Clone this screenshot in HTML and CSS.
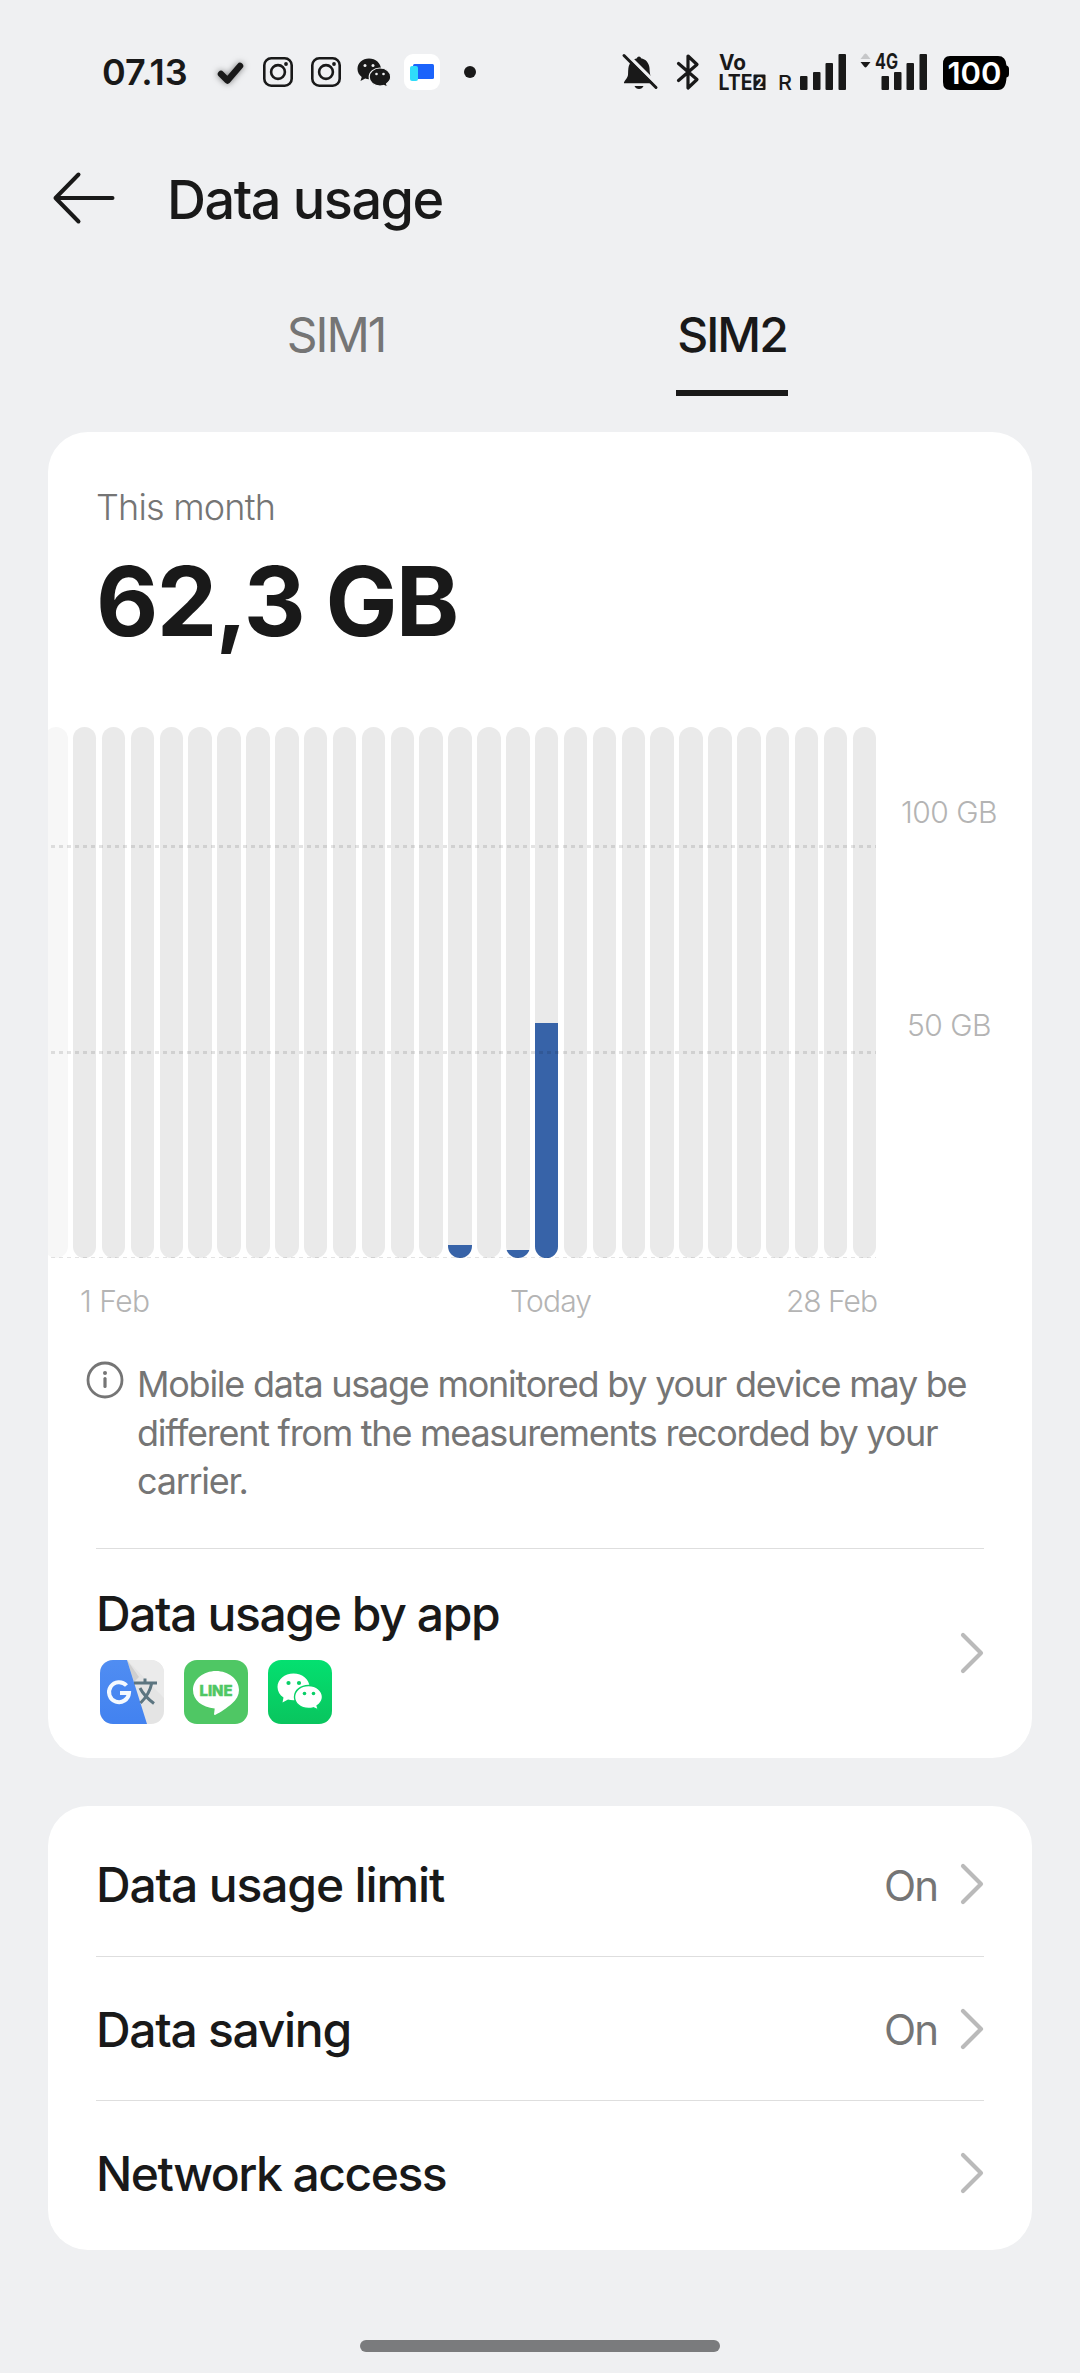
FILE: index.html
```html
<!DOCTYPE html>
<html lang="en">
<head>
    <meta charset="UTF-8">
    <meta name="viewport" content="width=device-width, initial-scale=1.0">
    <title>Data usage</title>
    <link rel="stylesheet" href="styles.css">
</head>
<body>

<div class="status-bar">
    <span class="time">07.13</span>
    <div class="notifications">
        <svg class="check" width="36" height="36" viewBox="0 0 36 36"><path d="M9 20l6.500 6.500L28 12" fill="none" stroke="#191919" stroke-width="6.500" stroke-linecap="round" stroke-linejoin="round"/></svg>
        <svg width="30" height="30" viewBox="0 0 30 30" fill="none" stroke="#191919" stroke-width="2.600"><rect x="1.300" y="1.300" width="27.400" height="27.400" rx="7"/><circle cx="15" cy="15" r="6.900"/><circle cx="23" cy="7" r="1.900" fill="#191919" stroke="none"/></svg>
        <svg width="30" height="30" viewBox="0 0 30 30" fill="none" stroke="#191919" stroke-width="2.600"><rect x="1.300" y="1.300" width="27.400" height="27.400" rx="7"/><circle cx="15" cy="15" r="6.900"/><circle cx="23" cy="7" r="1.900" fill="#191919" stroke="none"/></svg>
        <svg class="wechat" width="34" height="29" viewBox="0 0 34 29">
            <path d="M12 0.500C5.500 0.500 0.500 5 0.500 11c0 3.300 1.600 6 4.200 8L3.500 23l4.700-2.400c1.200.4 2.400.6 3.800.6 6.500 0 12-4.400 12-10.200S18.500.5 12 .5z" fill="#191919"/>
            <path d="M23 10c-6 0-10.800 4-10.800 9S17 28 23 28c1.300 0 2.500-.2 3.600-.5l3.900 1.500-.9-3.300c2.400-1.600 4.100-4 4.100-6.700 0-5-4.700-9-10.700-9z" fill="#191919" stroke="#eff0f2" stroke-width="1.200"/>
            <g fill="#eff0f2"><circle cx="8" cy="7.500" r="1.500"/><circle cx="16" cy="7.500" r="1.500"/><circle cx="19.500" cy="16" r="1.300"/><circle cx="26.500" cy="16" r="1.300"/></g>
        </svg>
        <svg width="36" height="36" viewBox="0 0 36 36"><rect width="36" height="36" rx="9" fill="#fff"/><rect x="9" y="10" width="21" height="15" rx="1.500" fill="#1b63fb"/><rect x="6" y="12" width="8" height="15" rx="2" fill="#2fdcfa"/></svg>
        <span class="more-dot"></span>
    </div>
    <div class="system-icons">
        <svg width="410" height="50" viewBox="0 -4 410 50">
            <!-- muted bell -->
            <path d="M18 4.500c1 0 1.800.7 2 1.800 4.800.9 8 4.600 8.500 9.700.3 5 .4 8.200 3.500 12.500v2.800H3c-.5-2 3.500-4.500 4-8.300.2-2.500 0-6 .8-9C9 10 12 7.300 16 6.300c.2-1.100 1-1.800 2-1.800z" fill="#191919"/>
            <path d="M13.500 34h9c-.8 2-2.400 3-4.500 3s-3.700-1-4.500-3z" fill="#191919"/>
            <path d="M5.500 2l33 33" stroke="#eff0f2" stroke-width="3.500"/>
            <path d="M3 3.500l32 32" stroke="#191919" stroke-width="3" stroke-linecap="round"/>
            <!-- bluetooth -->
            <path d="M57.500 11.500l18.500 16-9 8.500V4l9 8.500-18.500 16" fill="none" stroke="#191919" stroke-width="3.200" stroke-linejoin="round" stroke-linecap="round"/>
            <g fill="#191919" font-weight="700">
                <text x="98" y="17.500" font-size="21" textLength="27" lengthAdjust="spacingAndGlyphs">Vo</text>
                <text x="97.500" y="38" font-size="21" textLength="34" lengthAdjust="spacingAndGlyphs">LTE</text>
            </g>
            <rect x="132.500" y="22.500" width="12" height="15.500" rx="1" fill="#191919"/>
            <text x="134.500" y="35.500" font-size="14" font-weight="700" fill="#eff0f2" textLength="8" lengthAdjust="spacingAndGlyphs">2</text>
            <text x="157" y="38" font-size="20.500" font-weight="500" fill="#191919" textLength="14" lengthAdjust="spacingAndGlyphs">R</text>
            <g fill="#191919">
                <rect x="179" y="24" width="7.500" height="14" rx="1"/><rect x="192" y="20" width="7.500" height="18" rx="1"/><rect x="204.500" y="11" width="7.500" height="27" rx="1"/><rect x="217.500" y="2" width="7.500" height="36" rx="1"/>
                <rect x="260.500" y="24" width="7.500" height="14" rx="1"/><rect x="273" y="20" width="7.500" height="18" rx="1"/><rect x="285.500" y="11" width="7.500" height="27" rx="1"/><rect x="298.500" y="2" width="7.500" height="36" rx="1"/>
                <path d="M239.500 10h10l-3.800 4.800q-1.200 1.400-2.400 0z"/>
            </g>
            <path d="M239.500 7h10l-3.800-4.800q-1.200-1.400-2.400 0z" fill="#c6c7c9"/>
            <text x="254" y="16.500" font-size="21" font-weight="700" fill="#191919" stroke="#eff0f2" stroke-width="2.500" paint-order="stroke" textLength="23" lengthAdjust="spacingAndGlyphs">4G</text>
            <!-- battery -->
            <path d="M329 4h48q8 0 8.500 9.500q2.500.5 2.500 3.500v5q0 3-2.500 3.500Q385 38 377 38h-48q-7 0-7-8V12q0-8 7-8z" fill="#000"/>
            <text x="326.500" y="32" font-size="30" font-weight="600" fill="#fff" textLength="54" lengthAdjust="spacingAndGlyphs">100</text>
        </svg>
    </div>
</div>

<header class="header">
    <svg class="back" width="64" height="54" viewBox="0 0 64 54"><path d="M61.500 27H4.500M27.500 3.500L4.500 27 27.500 50.500" fill="none" stroke="#191919" stroke-width="4" stroke-linecap="round" stroke-linejoin="round"/></svg>
    <h1>Data usage</h1>
</header>

<nav class="tabs">
    <a class="tab"><span>SIM1</span></a>
    <a class="tab active"><span>SIM2</span></a>
</nav>

<section class="card usage-card">
    <div class="summary">
        <p class="period">This month</p>
        <p class="total">62,3 GB</p>
    </div>

    <div class="chart">
        <div class="plot">
            <div class="bars" id="bars"></div>
            <div class="grid-line line-100"></div>
            <div class="grid-line line-50"></div>
            <div class="grid-line line-0"></div>
        </div>
        <div class="y-axis">
            <span class="y-100">100 GB</span>
            <span class="y-50">50 GB</span>
        </div>
    </div>
    <div class="x-axis">
        <span class="x-first">1 Feb</span>
        <span class="x-today">Today</span>
        <span class="x-last">28 Feb</span>
    </div>

    <div class="note">
        <svg width="38" height="38" viewBox="0 0 38 38"><circle cx="19" cy="19" r="17" fill="none" stroke="#757575" stroke-width="2.800"/><path d="M19 17.500v8" stroke="#757575" stroke-width="3.200" stroke-linecap="round"/><circle cx="19" cy="12" r="2" fill="#757575"/></svg>
        <p>Mobile data usage monitored by your device may be<br>different from the measurements recorded by your<br>carrier.</p>
    </div>

    <div class="by-app">
        <div>
            <h2 class="by-app-title">Data usage by app</h2>
            <div class="apps">
                <!-- Translate -->
                <svg width="64" height="64" viewBox="0 0 64 64">
                    <defs>
                        <linearGradient id="blue" x2="0" y2="1"><stop stop-color="#508df2"/><stop offset="1" stop-color="#4282f0"/></linearGradient>
                        <clipPath id="round"><rect width="64" height="64" rx="13"/></clipPath>
                    </defs>
                    <g clip-path="url(#round)">
                        <rect width="64" height="64" fill="#e4e4e4"/>
                        <path d="M27 0h37v38z" fill="#ebebeb"/>
                        <path d="M27 0l12 17-5 5z" fill="#cfcfcf"/>
                        <path d="M0 0h27l20 64H0z" fill="url(#blue)"/>
                        <path d="M26.500 25.500A10 10 0 1 0 29 33h-9" fill="none" stroke="#f4f9ff" stroke-width="4"/>
                        <path d="M34 23h23M45 18.500V23M51.500 24c-1.500 8-6 14-11 19M40 28c3 6 8 11 14 15.500" fill="none" stroke="#5c7580" stroke-width="3"/>
                    </g>
                </svg>
                <!-- LINE -->
                <svg width="64" height="64" viewBox="0 0 64 64">
                    <rect width="64" height="64" rx="13" fill="#4fc764"/>
                    <path d="M32 11c12.500 0 23 8.300 23 19 0 5-2.500 9.500-7 13.500-5 4.500-12 9-16.500 11.300-1.500.7-1.600-.5-1.300-2l.5-4.300C18 47.500 9 40 9 30c0-10.700 10.500-19 23-19z" fill="#fff"/>
                    <text x="15.500" y="35.500" font-size="15" font-weight="800" fill="#4fc764" stroke="#4fc764" stroke-width=".5" textLength="33" lengthAdjust="spacingAndGlyphs">LINE</text>
                </svg>
                <!-- WeChat -->
                <svg width="64" height="64" viewBox="0 0 64 64">
                    <defs><linearGradient id="green" x2="0" y2="1"><stop stop-color="#04e070"/><stop offset="1" stop-color="#09c55e"/></linearGradient></defs>
                    <rect width="64" height="64" rx="13" fill="url(#green)"/>
                    <path d="M25.500 13.500C16.500 13.500 9.500 19.500 9.500 27c0 4.200 2.300 8 6 10.500l-1 5 5.500-3c1.700.5 3.600.8 5.500.8 9 0 16-6 16-13.300s-7-13.500-16-13.500z" fill="#fff"/>
                    <path d="M40.500 25.500c-8 0-14 5.200-14 11.500s6 11.500 14 11.500c1.700 0 3.300-.2 4.800-.7l5 2-1.200-4c3.300-2.200 5.400-5.300 5.400-8.800 0-6.300-6-11.500-14-11.500z" fill="#fff" stroke="#08d267" stroke-width="1.400"/>
                    <g fill="#08cf66"><circle cx="20.500" cy="23" r="2.100"/><circle cx="31" cy="23" r="2.100"/><circle cx="36.500" cy="33.500" r="1.800"/><circle cx="45.500" cy="33.500" r="1.800"/></g>
                </svg>
            </div>
        </div>
        <svg class="chevron" width="26" height="44" viewBox="0 0 26 44"><path d="M5 4l18 18L5 40"/></svg>
    </div>
</section>

<section class="card settings-card">
    <div class="row">
        <span class="row-title limit">Data usage limit</span>
        <span class="row-value">On</span>
        <svg class="chevron" width="26" height="44" viewBox="0 0 26 44"><path d="M5 4l18 18L5 40"/></svg>
    </div>
    <div class="row">
        <span class="row-title saving">Data saving</span>
        <span class="row-value">On</span>
        <svg class="chevron" width="26" height="44" viewBox="0 0 26 44"><path d="M5 4l18 18L5 40"/></svg>
    </div>
    <div class="row">
        <span class="row-title access">Network access</span>
        <svg class="chevron" width="26" height="44" viewBox="0 0 26 44"><path d="M5 4l18 18L5 40"/></svg>
    </div>
</section>

<div class="home-indicator"></div>

<script>
    // Height in px of the used part of each day, index 0 is the last day of January
    var usage = { 14: 13, 16: 8, 17: 235 };
    var bars = document.getElementById('bars');

    for (var day = 0; day <= 28; day++) {
        var bar = document.createElement('div');
        bar.className = day === 0 ? 'bar previous' : 'bar';
        if (usage[day]) {
            var fill = document.createElement('div');
            fill.className = 'fill';
            fill.style.height = usage[day] + 'px';
            bar.appendChild(fill);
        }
        bars.appendChild(bar);
    }
</script>

</body>
</html>
```

FILE: styles.css
```css
body {
    margin: 0;
    width: 1080px;
    height: 2373px;
    overflow: hidden;
    background-color: #eff0f2;
    color: #191919;
    font-family: Inter, Roboto, "Liberation Sans", sans-serif;
}

h1, h2, p {
    margin: 0;
    font-weight: 500;
}

svg {
    display: block;
    flex-shrink: 0;
}

/* Status bar */
.status-bar {
    display: flex;
    align-items: center;
    height: 144px;
    padding-left: 102px;
    box-sizing: border-box;
}

.time {
    width: 110px;
    font-size: 36px;
    font-weight: 600;
    white-space: nowrap;
}

.notifications {
    display: flex;
    align-items: center;
    width: 409px;
}

.notifications svg {
    margin-right: 18px;
}

.notifications .check {
    margin-right: 15px;
    filter: drop-shadow(0 0 3px rgba(0, 0, 0, 0.5));
}

.notifications .wechat {
    margin: 0 13px 0 -2px;
}

.more-dot {
    width: 12px;
    height: 12px;
    margin-left: 6px;
    border-radius: 50%;
    background-color: #191919;
}

.system-icons {
    padding-top: 2px;
}

/* Header */
.header {
    display: flex;
    align-items: center;
    height: 108px;
    padding-left: 51px;
}

.header h1 {
    margin-left: 52px;
    padding-top: 3px;
    font-size: 54px;
    line-height: 66px;
    letter-spacing: -1.5px;
    white-space: nowrap;
}

/* Tabs */
.tabs {
    display: flex;
    height: 144px;
    padding: 0 150px 0 138px;
}

.tab {
    flex: 1;
    display: flex;
    justify-content: center;
    font-size: 48px;
    font-weight: 400;
    letter-spacing: -2px;
    color: #757575;
}

.tab span {
    height: 144px;
    padding: 54px 1px 0;
    box-sizing: border-box;
    line-height: 58px;
}

.tab.active span {
    color: #191919;
    font-weight: 500;
    border-bottom: 6px solid #191919;
}

/* Cards */
.card {
    margin: 0 48px;
    border-radius: 40px;
    background-color: #fff;
    overflow: hidden;
}

.usage-card {
    height: 1326px;
    margin-top: 36px;
}

.summary {
    height: 295px;
    padding: 53px 48px 0;
    box-sizing: border-box;
}

.period {
    font-size: 36px;
    line-height: 44px;
    font-weight: 300;
    letter-spacing: -0.8px;
    color: #757575;
}

.total {
    margin-top: 20px;
    font-size: 96px;
    line-height: 104px;
    font-weight: 700;
    letter-spacing: -1.6px;
}

/* Chart */
.chart {
    display: flex;
    height: 531px;
}

.plot {
    position: relative;
    width: 828px;
    overflow: hidden;
}

.bars {
    display: grid;
    grid-template-columns: repeat(29, 1fr);
    gap: 5.4px;
    height: 531px;
    margin-left: -3.9px;
}

.bar {
    display: flex;
    align-items: flex-end;
    border-radius: 12px;
    background-color: #eaeaea;
    overflow: hidden;
}

.bar.previous {
    background-color: #f7f7f7;
}

.fill {
    width: 100%;
    background-color: #3763a8;
}

/* Dashed lines drawn over the bars */
.grid-line {
    position: absolute;
    left: 0;
    right: 0;
    height: 3px;
    background: repeating-linear-gradient(90deg, transparent 0 3px, rgba(0, 0, 0, 0.11) 3px 7px, transparent 7px 8px);
}

.line-100 {
    top: 118px;
}

.line-50 {
    top: 324px;
}

.line-0 {
    bottom: 0;
    height: 1.5px;
}

.y-axis {
    display: flex;
    flex-direction: column;
    align-items: center;
    width: 146px;
}

.y-axis span,
.x-axis span {
    font-size: 30px;
    line-height: 36px;
    font-weight: 300;
    letter-spacing: -0.5px;
    color: #b4b4b4;
    white-space: nowrap;
}

.y-100 {
    margin-top: 67px;
}

.y-50 {
    margin-top: 177px;
}

.x-axis {
    display: flex;
    height: 72px;
    margin-top: 25px;
}

.x-first {
    width: 430px;
    margin-left: 32px;
}

.x-axis .x-today {
    flex: 1;
    letter-spacing: -0.8px;
}

.x-axis .x-last {
    margin-right: 155px;
    letter-spacing: -1px;
}

/* Note */
.note {
    display: flex;
    height: 193px;
    padding: 6px 0 0 38px;
    box-sizing: border-box;
}

.note p {
    margin: -1px 0 0 13px;
    font-size: 36px;
    line-height: 48.5px;
    font-weight: 400;
    letter-spacing: -1.25px;
    color: #757575;
    white-space: nowrap;
}

/* Data usage by app */
.by-app {
    display: flex;
    justify-content: space-between;
    margin: 0 48px;
    border-top: 1px solid #dedede;
}

.by-app-title {
    margin-top: 36px;
    font-size: 48px;
    line-height: 58px;
    letter-spacing: -1.4px;
    white-space: nowrap;
}

.apps {
    display: flex;
    gap: 20px;
    padding: 17px 0 0 4px;
}

.by-app .chevron {
    margin-top: 82px;
}

.chevron path {
    fill: none;
    stroke: #bababa;
    stroke-width: 4.2;
    stroke-linecap: round;
    stroke-linejoin: round;
}

/* Settings */
.settings-card {
    height: 444px;
    margin-top: 48px;
    padding: 6px 48px;
    box-sizing: border-box;
}

.row {
    display: flex;
    align-items: center;
    height: 144px;
}

.row + .row {
    height: 143px;
    border-top: 1px solid #dedede;
}

.row-title {
    flex: 1;
    padding-top: 2px;
    font-size: 48px;
    line-height: 58px;
    font-weight: 500;
}

.limit {
    letter-spacing: -1.15px;
}

.saving {
    letter-spacing: -1.3px;
}

.access {
    letter-spacing: -1.5px;
}

.row-value {
    margin-right: 21px;
    padding-top: 2px;
    font-size: 42px;
    font-weight: 400;
    letter-spacing: -2px;
    color: #757575;
}

.home-indicator {
    width: 360px;
    height: 12px;
    margin: 90px auto 0;
    border-radius: 6px;
    background-color: #7a7b7d;
}
```
